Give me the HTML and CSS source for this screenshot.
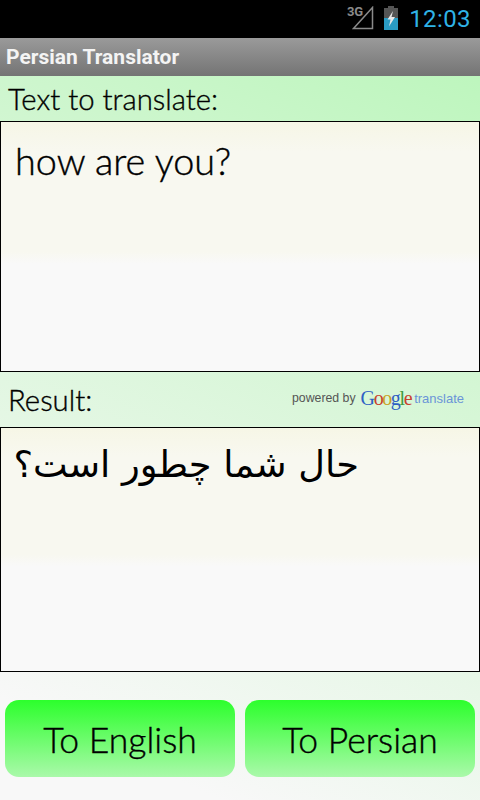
FILE: index.html
```html
<!DOCTYPE html>
<html>

<head>
    <meta charset="utf-8">
    <title>Persian Translator</title>
    <link rel="stylesheet" href="styles.css">
</head>

<body>
    <div id="wrap">
        <div class="status">
            <span class="net">3G</span>
            <svg class="signal" width="22" height="24" viewBox="0 0 22 24">
                <path d="M20.5 1.5V22.5H1.5Z" fill="none" stroke="#8a8a8a" stroke-width="1.5"/>
            </svg>
            <svg class="battery" width="16" height="24" viewBox="0 0 16 24">
                <rect x="5" y="0" width="6" height="3" fill="#555"/>
                <rect x="1" y="2" width="14" height="10" fill="#555"/>
                <rect x="1" y="12" width="14" height="12" fill="#2a9cc4"/>
                <path d="M10 5L4.5 13.5H7.5L6 20.5L12 11H8.5Z" fill="#e8e8e8"/>
            </svg>
            <span class="clock">12:03</span>
        </div>
        <div class="title">Persian Translator</div>

        <div class="label-row first">
            <span class="label">Text to translate:</span>
        </div>
        <div class="box box-source">how are you?</div>

        <div class="label-row second">
            <span class="label">Result:</span>
            <span class="powered">
                <span class="by">powered by</span>
                <span class="google"><b class="blue">G</b><b class="red">o</b><b class="yellow">o</b><b class="blue">g</b><b class="green">l</b><b class="red">e</b></span>
                <span class="translate">translate</span>
            </span>
        </div>
        <div class="box box-result" dir="rtl">حال شما چطور است؟</div>

        <div class="buttons">
            <a class="btn" href="javascript:;">To English</a>
            <a class="btn" href="javascript:;">To Persian</a>
        </div>
    </div>
</body>

</html>
```

FILE: styles.css
```css
* {
    margin: 0;
    padding: 0;
    box-sizing: border-box;
}

body {
    font-family: Lato, "Open Sans", sans-serif;
    color: #000;
}

#wrap {
    width: 480px;
    height: 800px;
    overflow: hidden;
    display: flex;
    flex-direction: column;
    background: linear-gradient(205deg, #b8f6b8 0%, #d2f6d2 35%, #e6f7e6 65%, #f8f8f8 90%);
}

.status {
    height: 38px;
    background: #000;
    display: flex;
    align-items: center;
    justify-content: flex-end;
    padding-right: 9px;
}

.net {
    align-self: flex-start;
    margin: 5px -11px 0 0;
    font: 700 13px/14px Roboto, sans-serif;
    color: #8a8a8a;
}

.signal {
    margin-top: -2px;
}

.battery {
    margin: -2px 0 0 9px;
}

.clock {
    margin-left: 10px;
    font: 400 24px/38px Roboto, sans-serif;
    color: #2fb3e6;
    letter-spacing: 0.4px;
}

.title {
    height: 38px;
    padding-left: 6px;
    background: linear-gradient(#9a9a9a, #747474);
    font: 700 21px/39px Roboto, sans-serif;
    color: #f4f4f4;
}

.label-row {
    display: flex;
    justify-content: space-between;
    padding: 0 16px 0 8px;
}

.first {
    height: 45px;
}

.second {
    height: 55px;
}

.label {
    font-size: 29.3px;
    font-weight: 300;
    -webkit-text-stroke: 0.35px #000;
    line-height: 45px;
}

.second .label {
    line-height: 56px;
}

.box {
    border: 1px solid #000;
    padding: 14px 14px;
    font-size: 37.8px;
    font-weight: 300;
    -webkit-text-stroke: 0.4px #000;
    line-height: 50px;
    background: linear-gradient(#f6f6e6, #f8f8f0 12%, #f8f8f0 52%, #f9f9f9 57%);
}

.box-source {
    height: 251px;
}

.box-result {
    height: 245px;
    padding: 12px 120px 0 0;
    font-family: "DejaVu Sans", sans-serif;
    font-size: 36.8px;
    font-weight: 400;
    -webkit-text-stroke: 0;
    text-align: right;
}

.powered {
    display: flex;
    align-items: center;
    height: 52px;
}

.by {
    font: 400 12.3px "Liberation Sans", sans-serif;
    color: #555;
}

.google {
    margin: 0 3px 0 5px;
    font: 400 20px "Liberation Serif", serif;
    letter-spacing: -1.4px;
}

.google b {
    font-weight: 400;
}

.blue {
    color: #2f5fc4;
}

.red {
    color: #c8402f;
}

.yellow {
    color: #c9a227;
}

.green {
    color: #3f9a3f;
}

.translate {
    font: 400 13px "Liberation Sans", sans-serif;
    color: #6a94d8;
}

.buttons {
    display: flex;
    gap: 10px;
    padding: 28px 5px 0;
}

.btn {
    flex: 1;
    height: 77px;
    border-radius: 14px;
    background: linear-gradient(#2cff2c, #aaf9aa);
    color: #000;
    text-align: center;
    text-decoration: none;
    font-size: 35.5px;
    font-weight: 300;
    -webkit-text-stroke: 0.4px #000;
    line-height: 80px;
}
```
